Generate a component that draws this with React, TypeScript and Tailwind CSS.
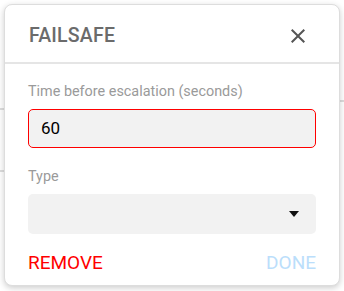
const CloseIcon = () => (
  <svg viewBox="0 0 24 24" className="w-6 h-6" fill="#555">
    <path d="M19 6.41 17.59 5 12 10.59 6.41 5 5 6.41 10.59 12 5 17.59 6.41 19 12 13.41 17.59 19 19 17.59 13.41 12z" />
  </svg>
);

const Caret = () => (
  <svg viewBox="0 0 10 6" className="w-[10px] h-[6px]" fill="#111">
    <path d="M0 0h10L5 6z" />
  </svg>
);

export default function App() {
  return (
    <div
      className="w-[344px] h-[291px] bg-white p-[4px] relative overflow-hidden"
      style={{ fontFamily: "Roboto, 'Liberation Sans', sans-serif" }}
    >
      {/* bits of the page behind the dialog */}
      <div className="absolute left-0 top-[108px] w-[6px] h-[2px] bg-[#ddd]" />
      <div className="absolute right-0 top-[100px] w-[6px] h-[2px] bg-[#ddd]" />
      <div className="absolute left-0 top-[170px] w-[6px] h-[2px] bg-[#ddd]" />

      <div className="relative w-[336px] h-[282px] bg-white rounded-lg border border-[#ddd] shadow-[0_2px_6px_rgba(0,0,0,0.2)] flex flex-col">
        <div className="h-[59px] border-b-2 border-[#e5e5e5] flex items-center justify-between pt-[5px] pl-[24px] pr-[29px]">
          <h2 className="text-[19.5px] text-[#6b6b6b] font-medium tracking-[0.2px]">FAILSAFE</h2>
          <CloseIcon />
        </div>

        <div className="flex flex-col px-[23px] pt-[18px]">
          <label className="text-[14.4px] leading-[20px] text-[#9a9a9a]">Time before escalation (seconds)</label>
          <div className="mt-[7px] h-[39px] rounded-[5px] border border-[#f00] bg-[#f2f2f2] flex items-center px-[12px] text-[17px] text-black">
            60
          </div>

          <label className="mt-[19px] text-[14.4px] leading-[20px] text-[#9a9a9a]">Type</label>
          <div className="mt-[7px] h-[40px] rounded-[5px] bg-[#f2f2f2] flex items-center justify-end pr-[17px]">
            <Caret />
          </div>

          <div className="mt-[15px] flex items-center justify-between">
            <button className="text-[19px] text-[#f00]">REMOVE</button>
            <button className="text-[19px] text-[#bbdefb]">DONE</button>
          </div>
        </div>
      </div>
    </div>
  );
}
